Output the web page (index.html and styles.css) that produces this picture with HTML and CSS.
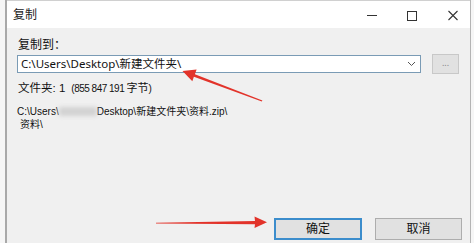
FILE: index.html
```html
<!DOCTYPE html>
<html>
<head>
<meta charset="utf-8">
<link rel="stylesheet" href="styles.css">
</head>
<body>
<div class="frame">
  <div class="window">
    <div class="titlebar">
      <span class="title">复制</span>
      <div class="controls">
        <svg class="ctl" width="40" height="28" viewBox="0 0 40 28"><line x1="0" y1="14.5" x2="10" y2="14.5" stroke="#333" stroke-width="1"/></svg>
        <svg class="ctl" width="41" height="28" viewBox="0 0 41 28"><rect x="0.5" y="10.5" width="9" height="9" fill="none" stroke="#333" stroke-width="1"/></svg>
        <svg class="ctl" width="22" height="28" viewBox="0 0 22 28"><path d="M0.5 10 L9.5 19 M9.5 10 L0.5 19" stroke="#333" stroke-width="1.1"/></svg>
      </div>
    </div>
    <div class="content">
      <div class="label">复制到：</div>
      <div class="row">
        <div class="combo">
          <span class="combo-text">C:\Users\Desktop\新建文件夹\</span>
          <svg class="chev" width="9" height="6" viewBox="0 0 9 6"><path d="M1 1 L4.5 4.5 L8 1" fill="none" stroke="#555" stroke-width="1"/></svg>
        </div>
        <div class="browse">...</div>
      </div>
      <div class="info">文件夹: 1<span class="num">(855 847 191 <span class="cjk">字节</span>)</span></div>
      <div class="path">
        <div>C:\Users\<span class="blur"></span>Desktop\新建文件夹\资料.zip\</div>
        <div class="indent">资料\</div>
      </div>
      <div class="buttons">
        <div class="btn primary">确定</div>
        <div class="btn">取消</div>
      </div>
    </div>
  </div>
  <svg class="arrows" width="474" height="243" viewBox="0 0 474 243">
    <polygon fill="#e2332a" points="262.4,100.6 194.9,74.2 196.6,69.5 182.5,71 192.3,81.2 193.9,76.8 261.8,101.6"/>
    <polygon fill="#e2332a" points="156,222.8 255,221 254.5,216.5 267,222.3 254.5,228 255,224.2 156,223.6"/>
  </svg>
</div>
</body>
</html>
```
FILE: styles.css
```css
html, body {
  margin: 0;
  padding: 0;
}
body {
  width: 474px;
  height: 243px;
  overflow: hidden;
  background: #f6f6f6;
  font-family: "Noto Sans", "Noto Sans CJK SC", sans-serif;
  font-size: 12px;
  color: #111;
}
.frame {
  position: relative;
  width: 474px;
  height: 243px;
}
.window {
  margin-left: 5px;
  width: 463px;
  height: 243px;
  border-left: 2px solid #a9a9a9;
  border-right: 1px solid #b4b4b4;
  display: flex;
  flex-direction: column;
  background: #f0f0f0;
}
.titlebar {
  height: 28px;
  background: #fff;
  display: flex;
  align-items: center;
  border-top: 1px solid #d0d0d0;
  box-sizing: border-box;
}
.title {
  padding-left: 6px;
  font-size: 12px;
  line-height: 16px;
  color: #222;
}
.controls {
  margin-left: auto;
  display: flex;
}
.ctl {
  display: block;
}
.content {
  flex: 1;
  display: flex;
  flex-direction: column;
  padding: 9px 8px 3px 11px;
}
.label {
  line-height: 16px;
  height: 16px;
  font-size: 12px;
}
.row {
  margin-top: 1px;
  display: flex;
  align-items: center;
  height: 20px;
}
.combo {
  width: 404px;
  height: 18px;
  box-sizing: border-box;
  margin-left: -1px;
  border: 1px solid #7a9bb5;
  background: #fff;
  display: flex;
  align-items: center;
  padding-left: 3px;
  padding-right: 4px;
}
.combo-text {
  font-size: 11.5px;
  line-height: 14px;
}
.chev {
  margin-left: auto;
}
.browse {
  margin-left: 11px;
  width: 27px;
  height: 20px;
  box-sizing: border-box;
  border: 1px solid #c8c8c8;
  background: #e1e1e1;
  color: #888;
  font-size: 9px;
  text-align: center;
  line-height: 16px;
}
.info {
  margin-top: 6px;
  line-height: 16px;
  font-family: "Liberation Sans", "Noto Sans CJK SC", sans-serif;
  font-size: 11.5px;
}
.num {
  margin-left: 6px;
  font-size: 10px;
  letter-spacing: -0.5px;
}
.cjk {
  font-size: 11px;
  letter-spacing: 0;
}
.path {
  margin-top: 9px;
  margin-left: -1px;
  font-family: "Liberation Sans", "Noto Sans CJK SC", sans-serif;
  font-size: 10px;
  line-height: 12.5px;
}
.indent {
  padding-left: 3px;
}
.blur {
  display: inline-block;
  width: 38px;
  height: 9px;
  vertical-align: -1px;
  background: #d2d2d2;
  filter: blur(2px);
}
.buttons {
  margin-top: auto;
  display: flex;
  justify-content: flex-end;
  gap: 13px;
}
.btn {
  width: 87px;
  height: 22px;
  box-sizing: border-box;
  border: 1px solid #adadad;
  background: #e1e1e1;
  text-align: center;
  line-height: 20px;
  font-size: 12px;
}
.btn.primary {
  width: 88px;
  border: 2px solid #3c8dcc;
  line-height: 18px;
}
.arrows {
  position: absolute;
  left: 0;
  top: 0;
  pointer-events: none;
}
```
